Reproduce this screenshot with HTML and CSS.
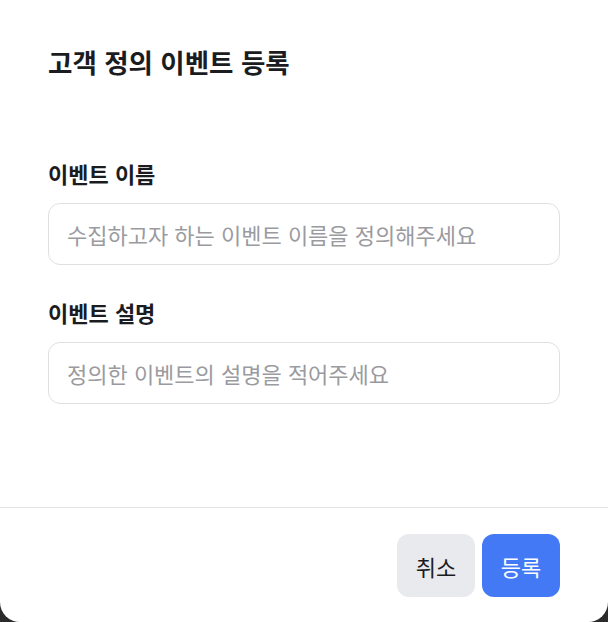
FILE: index.html
```html
<!DOCTYPE html>
<html lang="ko">
<head>
<meta charset="utf-8">
<title>고객 정의 이벤트 등록</title>
<link rel="stylesheet" href="styles.css">
</head>
<body>
<div class="modal">
  <div class="modal-body">
    <div class="title">고객 정의 이벤트 등록</div>
    <div class="field field-first">
      <label class="label" for="ev-name">이벤트 이름</label>
      <input class="input" id="ev-name" type="text" placeholder="수집하고자 하는 이벤트 이름을 정의해주세요">
    </div>
    <div class="field">
      <label class="label" for="ev-desc">이벤트 설명</label>
      <input class="input" id="ev-desc" type="text" placeholder="정의한 이벤트의 설명을 적어주세요">
    </div>
  </div>
  <div class="modal-footer">
    <button class="btn btn-cancel" type="button">취소</button>
    <button class="btn btn-ok" type="button">등록</button>
  </div>
</div>
</body>
</html>
```

FILE: styles.css
```css
html, body
  {
	margin : 0;
	padding : 0;
	background-color : #2b2b2b;
  } /*body*/

.modal
  {
	width : 608px;
	height : 622px;
	display : flex;
	flex-direction : column;
	background-color : #ffffff;
	border-radius : 0 0 20px 20px;
	font-family : "Noto Sans CJK KR", "Noto Sans", sans-serif;
	color : #1b1c1f;
  } /*.modal*/

.modal-body
  {
	flex : 1;
	padding : 44px 48px 0 48px;
  } /*.modal-body*/

.title
  {
	font-size : 26.5px;
	line-height : 36px;
	font-weight : 700;
  } /*.title*/

.field
  {
	display : flex;
	flex-direction : column;
	gap : 16px;
	margin-top : 33px;
  } /*.field*/
.field-first
  {
	margin-top : 79px;
  } /*.field-first*/

.label
  {
	font-size : 22px;
	line-height : 28px;
	font-weight : 700;
  } /*.label*/

.input
  {
	box-sizing : border-box;
	width : 512px;
	height : 62px;
	padding : 0 18px;
	border : 1px solid #dedfe3;
	border-radius : 12px;
	font-family : inherit;
	font-size : 22px;
	color : #1b1c1f;
	outline : none;
  } /*.input*/
.input::placeholder
  {
	color : #9a9ba0;
  } /*.input::placeholder*/

.modal-footer
  {
	display : flex;
	justify-content : flex-end;
	gap : 7px;
	padding : 26px 48px 25px 48px;
	border-top : 1px solid #e3e3e6;
  } /*.modal-footer*/

.btn
  {
	width : 78px;
	height : 63px;
	border : none;
	border-radius : 12px;
	font-family : inherit;
	font-size : 22px;
	cursor : pointer;
  } /*.btn*/
.btn-cancel
  {
	background-color : #e9eaee;
	color : #1b1c1f;
  } /*.btn-cancel*/
.btn-ok
  {
	background-color : #4479f6;
	color : #ffffff;
  } /*.btn-ok*/
```
